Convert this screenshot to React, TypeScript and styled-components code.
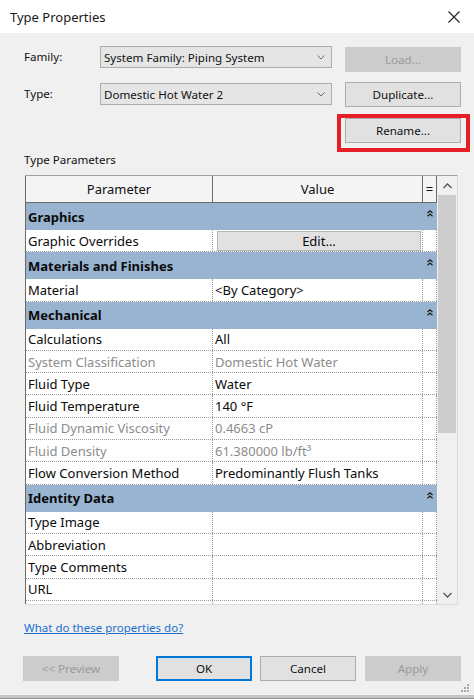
import styled, { createGlobalStyle } from "styled-components"

const GlobalStyle = createGlobalStyle`
    html, body {
        margin: 0;
        padding: 0;
        background: #ffffff;
    }
    body {
        font-family: "Noto Sans", "Open Sans", sans-serif;
        color: #000;
    }
`

type Row = {
    name: string,
    value?: string,
    muted?: boolean,
    edit?: boolean
}

type Group = {
    title: string,
    rows: Row[]
}

const groups: Group[] = [
    { title: "Graphics", rows: [{ name: "Graphic Overrides", edit: true }] },
    { title: "Materials and Finishes", rows: [{ name: "Material", value: "<By Category>" }] },
    {
        title: "Mechanical",
        rows: [
            { name: "Calculations", value: "All" },
            { name: "System Classification", value: "Domestic Hot Water", muted: true },
            { name: "Fluid Type", value: "Water" },
            { name: "Fluid Temperature", value: "140 °F" },
            { name: "Fluid Dynamic Viscosity", value: "0.4663 cP", muted: true },
            { name: "Fluid Density", value: "61.380000 lb/ft³", muted: true },
            { name: "Flow Conversion Method", value: "Predominantly Flush Tanks" },
        ]
    },
    {
        title: "Identity Data",
        rows: [
            { name: "Type Image" },
            { name: "Abbreviation" },
            { name: "Type Comments" },
            { name: "URL" },
            { name: "" },
        ]
    },
]

const Dialog = styled.div`
    width: 474px;
    height: 699px;
    display: flex;
    flex-direction: column;
    box-sizing: border-box;
    border-bottom: 1px solid #8e8e8e;
    box-shadow: inset 0 -3px 0 #c4c4c4;
    overflow: hidden;
`

const TitleBar = styled.div`
    height: 33px;
    flex: none;
    background: #ffffff;
    display: flex;
    align-items: center;
    justify-content: space-between;
    padding: 0 14px 0 10px;
    font-size: 13px;
    color: #1a1a1a;
`

const Body = styled.div`
    flex: 1;
    position: relative;
    background: #f0f0f0;
    padding: 13px 13px 0 24px;
    margin-bottom: 3px;
`

const FormRow = styled.div<{ $top?: number }>`
    display: grid;
    grid-template-columns: 76px 245px 116px;
    align-items: start;
    margin-top: ${p => p.$top ?? 0}px;
    font-size: 11.6px;
`

const Label = styled.div<{ $drop?: number }>`
    line-height: 22px;
    margin-top: ${p => p.$drop ?? 0}px;
    color: #111;
`

const Combo = styled.div<{ $drop?: number }>`
    width: 232px;
    height: 22px;
    box-sizing: border-box;
    margin-top: ${p => p.$drop ?? 0}px;
    background: #e5e5e5;
    border: 1px solid #acacac;
    display: flex;
    align-items: center;
    justify-content: space-between;
    padding: 0 6px 0 3px;
    color: #111;
`

const Button = styled.div<{ $disabled?: boolean, $primary?: boolean, $drop?: number }>`
    width: ${p => p.$primary ? 96 : 116}px;
    height: 25px;
    box-sizing: border-box;
    margin-top: ${p => p.$drop ?? 0}px;
    display: flex;
    align-items: center;
    justify-content: center;
    font-size: 11.6px;
    background: ${p => p.$disabled ? "#cccccc" : "#e1e1e1"};
    border: 1px solid ${p => p.$disabled ? "#cccccc" : "#adadad"};
    color: ${p => p.$disabled ? "#9a9a9a" : "#111"};
`

const Highlight = styled.div`
    position: relative;
`

const RedBox = styled.div`
    position: absolute;
    left: -8px;
    top: -4px;
    width: 133px;
    height: 38px;
    box-sizing: border-box;
    border: 4px solid #e61e28;
`

const SectionLabel = styled.div`
    margin-top: 9px;
    font-size: 11.6px;
    line-height: 16px;
    color: #111;
`

const GridFrame = styled.div`
    margin: 7px 0 0 1px;
    width: 433px;
    height: 430px;
    display: flex;
    box-sizing: border-box;
    border-top: 1px solid #a0a0a0;
    border-right: 1px solid #dadada;
    border-bottom: 1px solid #dadada;
`

const TableArea = styled.div`
    width: 412px;
    box-sizing: border-box;
    border-left: 1px solid #6a6a6a;
    background: #f0f0f0;
    overflow: hidden;
    font-size: 13px;
`

const HeaderRow = styled.div`
    display: grid;
    grid-template-columns: 187px 210px 14px;
    height: 26px;
    background: #f4f4f4;
    border-bottom: 1px solid #6a6a6a;
`

const HeaderCell = styled.div`
    display: flex;
    align-items: center;
    justify-content: center;
    border-right: 1px solid #6a6a6a;
    color: #111;
`

const GroupRow = styled.div`
    height: 27px;
    box-sizing: border-box;
    background: #99b4d1;
    display: flex;
    align-items: center;
    justify-content: space-between;
    padding: 0 4px 0 2px;
    font-weight: 700;
    color: #0a0a0a;
`

const Collapse = styled.svg`
    align-self: flex-start;
    margin-top: 7px;
`

const PropRow = styled.div`
    display: grid;
    grid-template-columns: 187px 210px 14px;
    height: 22.3px;
    box-sizing: border-box;
    background: #ffffff;
    border-bottom: 1px dotted #9a9a9a;
`

const PropCell = styled.div<{ $muted?: boolean }>`
    display: flex;
    align-items: center;
    padding-left: 2px;
    white-space: nowrap;
    overflow: hidden;
    border-right: 1px dotted #9a9a9a;
    color: ${p => p.$muted ? "#8c8c8c" : "#0a0a0a"};
`

const EditButton = styled.div`
    margin: 1px 1px 0 2px;
    flex: 1;
    height: 20px;
    box-sizing: border-box;
    background: #e1e1e1;
    border: 1px solid #b4b4b4;
    display: flex;
    align-items: center;
    justify-content: center;
`

const Scrollbar = styled.div`
    width: 20px;
    background: #f0f0f0;
    display: flex;
    flex-direction: column;
    align-items: center;
`

const ScrollArrow = styled.div`
    height: 19px;
    display: flex;
    align-items: center;
    justify-content: center;
`

const Thumb = styled.div`
    width: 18px;
    height: 238px;
    background: #cdcdcd;
`

const Spacer = styled.div`
    flex: 1;
`

const HelpLink = styled.a`
    display: block;
    margin-top: 15px;
    font-size: 11.5px;
    line-height: 16px;
    color: #1a6fd0;
    text-decoration: underline;
    width: max-content;
`

const ButtonBar = styled.div`
    margin: 20px 0 0 -1px;
    display: flex;
    gap: 8px;
    & > :nth-child(2) {
        margin-left: 29px;
    }
    & > :nth-child(4) {
        margin-left: 1px;
    }
`

const OkButton = styled(Button)`
    border: 2px solid #0078d7;
`

const Grip = styled.svg`
    position: absolute;
    right: 4px;
    bottom: 2px;
`

function Chevron({ down }: { down?: boolean }) {
    return (
        <svg width="9" height="6" viewBox="0 0 9 6">
            <path d={down ? "M0.5 1 L4.5 5 L8.5 1" : "M0.5 5 L4.5 1 L8.5 5"} fill="none" stroke="#555" strokeWidth="1.3" />
        </svg>
    )
}

export default function App() {
    return (
        <>
            <GlobalStyle />
            <Dialog>
                <TitleBar>
                    <span>Type Properties</span>
                    <svg width="12" height="12" viewBox="0 0 12 12">
                        <path d="M0.5 0.5 L11.5 11.5 M11.5 0.5 L0.5 11.5" stroke="#222" strokeWidth="1.1" />
                    </svg>
                </TitleBar>
                <Body>
                    <FormRow>
                        <Label>Family:</Label>
                        <Combo>
                            <span>System Family: Piping System</span>
                            <svg width="8" height="5" viewBox="0 0 8 5"><path d="M0.5 0.5 L4 4 L7.5 0.5" fill="none" stroke="#666" /></svg>
                        </Combo>
                        <Button $disabled $drop={1}>Load...</Button>
                    </FormRow>
                    <FormRow $top={10}>
                        <Label $drop={1}>Type:</Label>
                        <Combo $drop={1}>
                            <span>Domestic Hot Water 2</span>
                            <svg width="8" height="5" viewBox="0 0 8 5"><path d="M0.5 0.5 L4 4 L7.5 0.5" fill="none" stroke="#666" /></svg>
                        </Combo>
                        <Button>Duplicate...</Button>
                    </FormRow>
                    <FormRow $top={11}>
                        <span />
                        <span />
                        <Highlight>
                            <Button>Rename...</Button>
                            <RedBox />
                        </Highlight>
                    </FormRow>

                    <SectionLabel>Type Parameters</SectionLabel>

                    <GridFrame>
                        <TableArea>
                            <HeaderRow>
                                <HeaderCell>Parameter</HeaderCell>
                                <HeaderCell>Value</HeaderCell>
                                <HeaderCell>=</HeaderCell>
                            </HeaderRow>
                            {groups.map(g => (
                                <div key={g.title}>
                                    <GroupRow>
                                        <span>{g.title}</span>
                                        <Collapse width="6" height="7" viewBox="0 0 6 7">
                                            <path d="M0.5 3 L3 0.8 L5.5 3 M0.5 6.3 L3 4.1 L5.5 6.3" fill="none" stroke="#1a1a1a" strokeWidth="1.2" />
                                        </Collapse>
                                    </GroupRow>
                                    {g.rows.map((r, i) => (
                                        <PropRow key={i}>
                                            <PropCell $muted={r.muted}>{r.name}</PropCell>
                                            <PropCell $muted={r.muted}>
                                                {r.edit ? <EditButton>Edit...</EditButton> : r.value}
                                            </PropCell>
                                            <PropCell />
                                        </PropRow>
                                    ))}
                                </div>
                            ))}
                        </TableArea>
                        <Scrollbar>
                            <ScrollArrow><Chevron /></ScrollArrow>
                            <Thumb />
                            <Spacer />
                            <ScrollArrow><Chevron down /></ScrollArrow>
                        </Scrollbar>
                    </GridFrame>

                    <HelpLink>What do these properties do?</HelpLink>

                    <ButtonBar>
                        <Button $primary $disabled>&lt;&lt; Preview</Button>
                        <OkButton $primary>OK</OkButton>
                        <Button $primary>Cancel</Button>
                        <Button $primary $disabled>Apply</Button>
                    </ButtonBar>

                    <Grip width="10" height="10" viewBox="0 0 10 10">
                        <g fill="#a8a8a8">
                            <rect x="7" y="1" width="2" height="2" />
                            <rect x="4" y="4" width="2" height="2" />
                            <rect x="7" y="4" width="2" height="2" />
                            <rect x="1" y="7" width="2" height="2" />
                            <rect x="4" y="7" width="2" height="2" />
                            <rect x="7" y="7" width="2" height="2" />
                        </g>
                    </Grip>
                </Body>
            </Dialog>
        </>
    )
}
